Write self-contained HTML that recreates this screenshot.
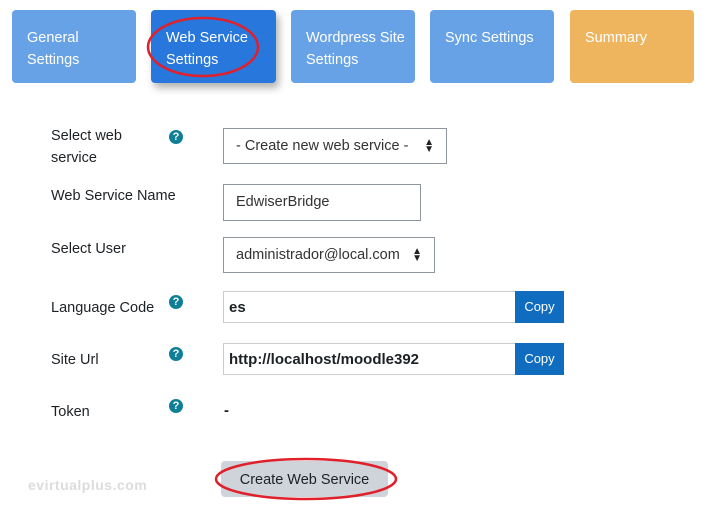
<!DOCTYPE html>
<html><head><meta charset="utf-8"><style>
*{margin:0;padding:0;box-sizing:border-box}
body{width:720px;height:512px;background:#fff;font-family:"Liberation Sans",sans-serif;color:#1d2125;position:relative;overflow:hidden;font-size:14px}
.a{position:absolute}
.tab{position:absolute;top:10px;height:73px;border-radius:4px;color:#fff;padding:17px 0 0 15px;font-size:14.5px;line-height:22px;background:#67a2e7}
.lbl{position:absolute;left:51px;font-size:14.5px;line-height:22px}
.q{position:absolute;left:169px;width:14px;height:14px;border-radius:50%;background:#0f7f97;color:#fff;font-size:11px;font-weight:bold;text-align:center;line-height:14px}
.box{position:absolute;border:1px solid #8f959e;background:#fff;padding-left:12px;font-size:14.5px;color:#333}
.arr{position:absolute;right:12px;top:50%;font-size:10px;line-height:7px;margin-top:-7px;color:#222}
.in{position:absolute;left:223px;width:293px;height:32px;border:1px solid #ccc;font-weight:bold;font-size:15px;padding-left:5px;line-height:31px}
.cp{position:absolute;left:515px;width:49px;height:32px;background:#0f6cbf;color:#fff;font-size:13px;text-align:center;line-height:32px}
</style></head><body>
<div class="tab" style="left:12px;width:124px">General<br>Settings</div>
<div class="tab" style="left:151px;width:125px;background:#2877dc;box-shadow:3px 5px 8px rgba(0,0,0,.3)">Web Service<br>Settings</div>
<div class="tab" style="left:291px;width:124px">Wordpress Site<br>Settings</div>
<div class="tab" style="left:430px;width:124px">Sync Settings</div>
<div class="tab" style="left:570px;width:124px;background:#efb55e">Summary</div>

<div class="lbl" style="top:125px">Select web<br>service</div>
<div class="q" style="top:130px">?</div>
<div class="box" style="left:223px;top:128px;width:224px;height:36px;line-height:34px">- Create new web service -<div class="arr">▲<br>▼</div></div>

<div class="lbl" style="top:185px">Web Service Name</div>
<div class="box" style="left:223px;top:184px;width:198px;height:37px;line-height:35px">EdwiserBridge</div>

<div class="lbl" style="top:238px">Select User</div>
<div class="box" style="left:223px;top:237px;width:212px;height:36px;line-height:34px">administrador@local.com<div class="arr">▲<br>▼</div></div>

<div class="lbl" style="top:297px">Language Code</div>
<div class="q" style="top:295px">?</div>
<div class="in" style="top:291px">es</div><div class="cp" style="top:291px">Copy</div>

<div class="lbl" style="top:349px">Site Url</div>
<div class="q" style="top:347px">?</div>
<div class="in" style="top:343px">http://localhost/moodle392</div><div class="cp" style="top:343px">Copy</div>

<div class="lbl" style="top:401px">Token</div>
<div class="q" style="top:399px">?</div>
<div class="a" style="left:224px;top:402px;font-weight:bold;font-size:15px">-</div>

<div class="a" style="left:28px;top:477px;color:#dcdcdc;font-size:14px;font-weight:bold;letter-spacing:.5px">evirtualplus.com</div>
<div class="a" style="left:221px;top:461px;width:167px;height:36px;background:#ced4da;border-radius:4px;text-align:center;line-height:38px;font-size:14.5px">Create Web Service</div>
<svg class="a" style="left:0;top:0" width="720" height="512"><ellipse cx="203" cy="47" rx="55" ry="29" fill="none" stroke="#e0202a" stroke-width="2.5"/><ellipse cx="306" cy="479" rx="90" ry="20" fill="none" stroke="#e0202a" stroke-width="2.5"/></svg>
</body></html>
